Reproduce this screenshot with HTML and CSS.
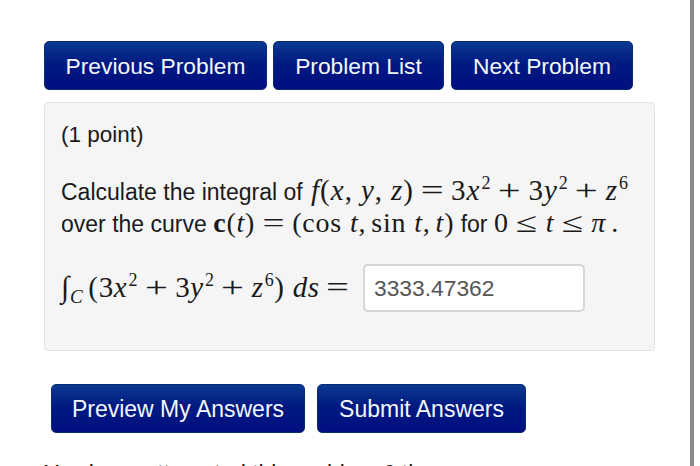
FILE: index.html
```html
<!DOCTYPE html>
<html lang="en">
<head>
<meta charset="utf-8">
<title>Problem</title>
<link rel="stylesheet" href="styles.css">
</head>
<body>
<div class="page">
  <main class="content">
    <nav class="nav">
      <a class="btn btn-prev">Previous Problem</a>
      <a class="btn btn-list">Problem List</a>
      <a class="btn btn-next">Next Problem</a>
    </nav>
    <section class="well">
      <p class="point">(1 point)</p>
      <p class="statement">
        <span class="line">Calculate the integral of <span class="math wide"><i>f</i>(<i>x</i>,<i class="c">y</i>,<i class="c">z</i>)<span class="op">=</span>3<i>x</i><sup>2</sup><span class="op">+</span>3<i>y</i><sup>2</sup><span class="op">+</span><i>z</i><sup>6</sup></span></span>
        <span class="line">over the curve <span class="math"><b>c</b>(<i>t</i>)<span class="op">=</span>(cos <i>t</i>,<span class="c">sin</span> <i>t</i>,<i class="c">t</i>)</span> for <span class="math">0<span class="op">≤</span><i>t</i><span class="op">≤</span><i>π</i><span class="dot">.</span></span></span>
      </p>
      <div class="answer">
        <span class="math"><span class="int">∫</span><i class="sub">C</i>(3<i>x</i><sup>2</sup><span class="op">+</span>3<i>y</i><sup>2</sup><span class="op">+</span><i>z</i><sup>6</sup>) <i>ds</i><span class="op">=</span></span>
        <div class="input">3333.47362</div>
      </div>
    </section>
    <div class="actions">
      <a class="btn btn-preview">Preview My Answers</a>
      <a class="btn btn-submit">Submit Answers</a>
    </div>
    <p class="attempts">You have attempted this problem 6 times.</p>
  </main>
  <div class="scrollbar"></div>
</div>
</body>
</html>
```
FILE: styles.css
```css
html, body { margin: 0; padding: 0; background: #fff; }
body { font-family: "Liberation Sans", Arial, sans-serif; color: #1a1a1a; }
.page { display: flex; width: 700px; height: 466px; overflow: hidden; }
.content { width: 690px; flex: none; padding: 41px 0 0 44px; box-sizing: border-box; }
.scrollbar { width: 4px; flex: none; background: #8a8a8a; }

.btn {
  display: flex; align-items: center; justify-content: center;
  height: 49px; box-sizing: border-box; padding-top: 2px;
  border-radius: 5px;
  border: 1px solid #0a2a78;
  background: linear-gradient(#0a3a90, #001a82 45%, #000f80);
  color: #f4f6fb; font-size: 22.8px; white-space: nowrap;
}
.nav { display: flex; gap: 6px; }
.btn-prev { width: 223px; }
.btn-list { width: 171px; }
.btn-next { width: 182px; margin-left: 1px; }

.well {
  width: 611px; height: 249px; box-sizing: border-box;
  margin-top: 12px; padding: 19px 16px 0;
  background: #f5f5f5;
  border: 1px solid #e4e4e4; border-radius: 4px;
  font-size: 23px;
}
.point { margin: 0; font-size: 22.5px; line-height: 26px; }
.statement { margin: 28px 0 0; }
.line { display: block; height: 32px; line-height: 32px; white-space: nowrap; }
.math { font-family: "Liberation Serif", serif; font-size: 28px; line-height: 0; letter-spacing: 0.8px; }
.math sup { font-size: 18px; line-height: 0; vertical-align: 11px; margin-left: 1px; }
.math b { font-weight: 700; }
.wide { margin-left: 2px; font-size: 29px; letter-spacing: 1px; }
.c { margin-left: 5px; }
.wide .c { margin-left: 8px; }
.dot { margin-left: 5px; }
.op { display: inline-block; width: 22px; margin: 0 7.5px; text-align: center; transform: scaleX(1.4); }
.answer { display: flex; align-items: center; gap: 15px; margin-top: 24px; }
.answer .math { width: 287px; flex: none; font-size: 29px; white-space: nowrap; letter-spacing: 0.7px; }
.answer .op { margin: 0 7.5px; }
.int { font-size: 30px; }
.sub { font-size: 19px; vertical-align: -6px; line-height: 0; margin-right: 5px; }
.input {
  width: 222px; height: 48px; box-sizing: border-box;
  display: flex; align-items: center; padding-left: 9px;
  background: #fff; border: 2px solid #d6d6d6; border-radius: 5px;
  color: #555; font-size: 22.8px;
}
.actions { display: flex; gap: 12px; margin: 33px 0 0 7px; }
.actions .btn { font-size: 23px; }
.btn-preview { width: 254px; }
.btn-submit { width: 209px; }
.attempts { margin: 26px 0 0; font-size: 22.8px; line-height: 26px; white-space: nowrap; }
```
